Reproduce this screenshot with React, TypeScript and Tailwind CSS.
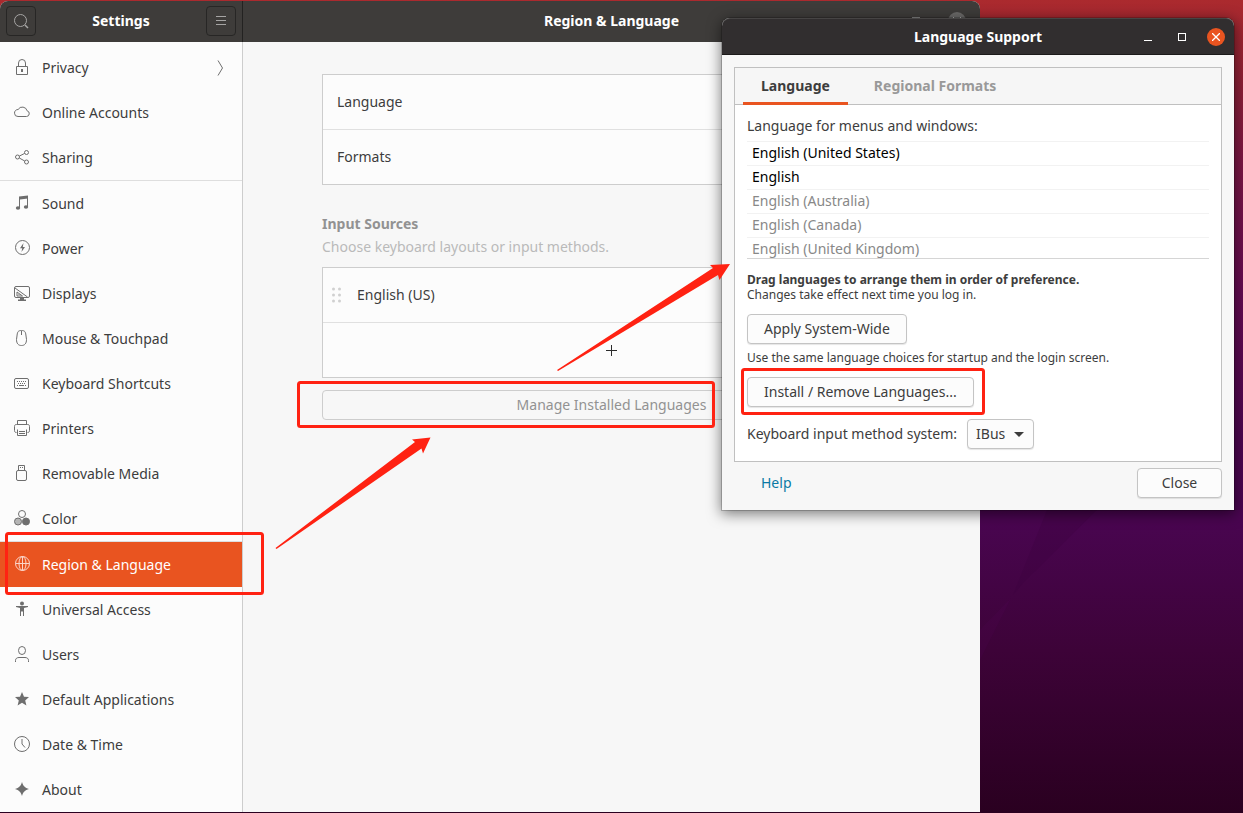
import { useState, type ReactNode } from "react";

interface NavItem {
  label: string;
  icon: ReactNode;
  arrow?: boolean;
  separator?: boolean;
}

function Icon({ children }: { children: ReactNode }) {
  return (
    <svg
      viewBox="0 0 16 16"
      className="h-4 w-4 flex-shrink-0"
      fill="none"
      stroke="currentColor"
      strokeWidth="1"
      aria-hidden="true"
    >
      {children}
    </svg>
  );
}

const NAV: NavItem[] = [
  {
    label: "Privacy",
    arrow: true,
    icon: (
      <>
        <path d="M2.5 7.5h11v8h-11zM4.500 7.500V4a3.500 3.500 0 0 1 7 0v3.500" />
        <path d="M7 10h2v3H7z" fill="currentColor" stroke="none" />
      </>
    ),
  },
  {
    label: "Online Accounts",
    icon: <path d="M4 12.500h8.500a2.900 2.900 0 0 0 .6-5.700 4.900 4.900 0 0 0-9-1.300A3.500 3.500 0 0 0 .5 9.200 3.400 3.400 0 0 0 4 12.500z" />,
  },
  {
    label: "Sharing",
    icon: (
      <>
        <circle cx="3.500" cy="8" r="2" />
        <circle cx="12.500" cy="3.500" r="2" />
        <circle cx="12.500" cy="13" r="2" />
        <path d="M5.300 7.100l5.400-2.700M5.300 9l5.400 3" />
      </>
    ),
  },
  {
    label: "Sound",
    separator: true,
    icon: (
      <g fill="currentColor" stroke="none">
        <path d="M5 1.500L14 .5v3L6 4.500V13H5z" />
        <path d="M13 1h1v11h-1z" />
        <ellipse cx="4" cy="13" rx="2.200" ry="1.800" />
        <ellipse cx="12" cy="12" rx="2.200" ry="1.800" />
      </g>
    ),
  },
  {
    label: "Power",
    icon: (
      <>
        <circle cx="8.500" cy="7.500" r="7" />
        <path d="M9.500 3L6 8.200h2.200L7.500 12 11 7H8.800z" fill="currentColor" stroke="none" />
      </>
    ),
  },
  {
    label: "Displays",
    icon: (
      <>
        <rect x=".5" y="1.500" width="15" height="11" rx="1.500" />
        <path d="M1 3l12.500 9M3 7v4h5.500L3 7M4.500 9.500h1" />
        <path d="M6 13h4v1.500h2V16H4v-1.500h2z" fill="currentColor" stroke="none" />
      </>
    ),
  },
  {
    label: "Mouse & Touchpad",
    icon: <path d="M7.500.5C4 .5 3.500 2 3.100 5l-.6 4.500c0 4 1.800 6 5 6s5-2 5-6L11.900 5C11.500 2 11 .5 7.500.5zM7.500 1v4" />,
  },
  {
    label: "Keyboard Shortcuts",
    icon: (
      <>
        <rect x=".5" y="3.500" width="14" height="10" rx="1.500" />
        <path d="M3 6.500h9M4 8.500h8" strokeDasharray="1 1" />
        <path d="M3 10.500h1M5 10.500h5M11 10.500h1" />
      </>
    ),
  },
  {
    label: "Printers",
    icon: (
      <>
        <path d="M3.500 4V.5h9V4M2.500 12.500C1.200 12.500.5 12 .5 10.500V6.500c0-1.500.7-2 2-2h11c1.300 0 2 .5 2 2v4c0 1.500-.7 2-2 2" />
        <path d="M3.500 9.500v6h9v-6M5 11.500h6M5 13.500h6" />
      </>
    ),
  },
  {
    label: "Removable Media",
    icon: (
      <>
        <rect x="2.500" y="5.500" width="10" height="10" rx="1.500" />
        <path d="M4.500 5V.5h6V5M6 2.500h1M8 2.500h1" />
      </>
    ),
  },
  {
    label: "Color",
    icon: (
      <>
        <circle cx="8" cy="4" r="3.500" />
        <circle cx="4" cy="11.500" r="3.500" fill="#b5b5b5" />
        <circle cx="12" cy="11.500" r="3.500" fill="currentColor" />
      </>
    ),
  },
  {
    label: "Region & Language",
    separator: true,
    icon: (
      <>
        <circle cx="8.500" cy="7.500" r="7" />
        <ellipse cx="8.500" cy="7.500" rx="3.500" ry="7" />
        <path d="M8.500.5v14M1.500 7.500h14" />
      </>
    ),
  },
  {
    label: "Universal Access",
    icon: (
      <g fill="currentColor" stroke="none">
        <circle cx="8" cy="2.500" r="2" />
        <path d="M2 5h12v1l-4 1v8H9v-4.500H7V15H6V7L2 6z" />
      </g>
    ),
  },
  {
    label: "Users",
    icon: (
      <>
        <ellipse cx="8" cy="4.500" rx="3.500" ry="4" />
        <path d="M1.500 16v-1.500c0-2 1.500-3 3.500-3h6c2 0 3.500 1 3.500 3V16" />
      </>
    ),
  },
  {
    label: "Default Applications",
    icon: (
      <path
        d="M8 1l2 4.700 5 .4-3.800 3.300 1.200 5L8 11.800l-4.400 2.600 1.200-5L1 6.100l5-.4z"
        fill="currentColor"
        stroke="none"
      />
    ),
  },
  {
    label: "Date & Time",
    icon: (
      <>
        <circle cx="8" cy="8" r="7.500" />
        <path d="M8 3v5l3 3.500" />
      </>
    ),
  },
  {
    label: "About",
    icon: (
      <path
        d="M8 1c1.300 4.200 2.800 5.700 7 7-4.200 1.300-5.700 2.800-7 7-1.300-4.200-2.800-5.700-7-7 4.200-1.300 5.700-2.800 7-7z"
        fill="currentColor"
        stroke="none"
      />
    ),
  },
];

const LANGUAGES = [
  { name: "English (United States)", enabled: true },
  { name: "English", enabled: true },
  { name: "English (Australia)", enabled: false },
  { name: "English (Canada)", enabled: false },
  { name: "English (United Kingdom)", enabled: false },
];

// ── Desktop background ──────────────────────────────────────────────────────
function Wallpaper() {
  return (
    <div className="absolute inset-0 bg-[linear-gradient(to_bottom,#ab2a2e_0%,#8f2036_10%,#7c1745_20%,#650b52_36%,#4d0650_54%,#490550_64%,#3d0338_80%,#2a0020_100%)]">
      <svg viewBox="0 0 283 333" className="absolute bottom-0 right-0 h-[333px] w-[283px]" aria-hidden="true">
        <path d="M87 30h50L63 103 53 115z" fill="#3a0340" opacity=".3" />
        <path d="M51 118L20 150v30l9-18z" fill="#5a0a60" opacity=".12" />
      </svg>
    </div>
  );
}

// ── Settings window ─────────────────────────────────────────────────────────
function Sidebar() {
  const [active, setActive] = useState("Region & Language");

  return (
    <nav className="w-[243px] flex-shrink-0 border-r border-[#cdcdcd] bg-[#fcfcfc] pt-[3px]">
      {NAV.map((item) => (
        <div key={item.label} className={item.separator ? "border-t border-[#dedede]" : ""}>
          <button
            onClick={() => setActive(item.label)}
            className={`flex h-[45px] w-full items-center gap-3 pl-3.5 pr-[18px] text-left ${
              active === item.label ? "bg-[#e95420] text-white" : "text-[#3d3d3d]"
            }`}
          >
            <span className={`pb-0.5 ${active === item.label ? "text-[#fbd5c8]" : "text-[#6e6e6e]"}`}>
              <Icon>{item.icon}</Icon>
            </span>
            <span className="flex-1">{item.label}</span>
            {item.arrow && (
              <svg viewBox="0 0 8 16" className="h-4 w-2 text-[#6e6e6e]" fill="none" stroke="currentColor" aria-hidden="true">
                <path d="M2 .5L6.500 8 2 15.500" />
              </svg>
            )}
          </button>
        </div>
      ))}
    </nav>
  );
}

function SettingsWindow() {
  return (
    <section className="absolute bottom-px left-0 right-[263px] top-px flex flex-col overflow-hidden rounded-t-lg bg-[#f7f7f7]">
      <header className="flex h-[41px] flex-shrink-0 bg-[#3e3c3a] font-bold text-white">
        <div className="flex w-[243px] items-center justify-between border-r border-[#232221] px-1.5 pb-0.5">
          <button
            aria-label="Search"
            className="flex h-[30px] w-[30px] items-center justify-center rounded border border-[#272625] text-[#a6a5a4]"
          >
            <Icon>
              <circle cx="7.500" cy="7.500" r="6" />
              <path d="M12 12l3 3" strokeWidth="1.500" />
            </Icon>
          </button>
          <h1>Settings</h1>
          <button
            aria-label="Menu"
            className="flex h-[30px] w-[30px] items-center justify-center rounded border border-[#272625] text-[#a6a5a4]"
          >
            <Icon>
              <path d="M3 3.500h10M3 7.500h10M3 11.500h10" />
            </Icon>
          </button>
        </div>
        <div className="relative flex flex-1 items-center justify-center pb-0.5">
          <h2>Region &amp; Language</h2>
          <div className="absolute right-3.5 flex items-center gap-7">
            <button aria-label="Restore" className="h-2 w-2 border border-[#9a9a9a]" />
            <button
              aria-label="Close settings"
              className="flex h-[18px] w-[18px] items-center justify-center rounded-full bg-[#6b6a69] text-[#c9c9c9]"
            >
              <svg viewBox="0 0 8 8" className="h-2 w-2" stroke="currentColor" aria-hidden="true">
                <path d="M0 0l8 8M8 0L0 8" />
              </svg>
            </button>
          </div>
        </div>
      </header>

      <div className="flex min-h-0 flex-1">
        <Sidebar />
        <main className="flex-1 px-[79px] pt-8 text-[#3d3d3d]">
          <div className="divide-y divide-[#e0e0e0] border border-[#cdcdcd] bg-[#fcfcfc]">
            <button className="flex h-[55px] w-full items-center px-3.5">Language</button>
            <button className="flex h-[54px] w-full items-center px-3.5">Formats</button>
          </div>

          <h3 className="mt-[29px] font-bold text-[#929292]">Input Sources</h3>
          <p className="mt-[3px] text-[#bababa]">Choose keyboard layouts or input methods.</p>

          <div className="mt-2.5 divide-y divide-[#e0e0e0] border border-[#cdcdcd] bg-[#fcfcfc]">
            <div className="flex h-[55px] items-center gap-4 px-[9px]">
              <svg viewBox="0 0 9 16" className="h-4 w-[9px]" fill="#d0d0d0" aria-hidden="true">
                {[2, 8, 14].map((y) => (
                  <g key={y}>
                    <circle cx="1.500" cy={y} r="1.500" />
                    <circle cx="7.500" cy={y} r="1.500" />
                  </g>
                ))}
              </svg>
              <span>English (US)</span>
            </div>
            <button aria-label="Add input source" className="flex h-[54px] w-full items-center justify-center">
              <svg viewBox="0 0 11 11" className="h-[11px] w-[11px]" stroke="#2b2b2b" aria-hidden="true">
                <path d="M5.500 0v11M0 5.500h11" />
              </svg>
            </button>
          </div>

          <button className="mt-3 h-[30px] w-full rounded border border-[#cdcdcd] text-[#929292]">
            Manage Installed Languages
          </button>
        </main>
      </div>
    </section>
  );
}

// ── Language Support dialog ─────────────────────────────────────────────────
const BUTTON = "h-[30px] rounded border border-[#c4c4c4] bg-[#fcfcfc] shadow-[0_1px_1px_#0000001a]";

function LanguageDialog() {
  const [tab, setTab]       = useState("Language");
  const [method, setMethod] = useState("IBus");

  return (
    <section className="absolute right-[9px] top-[18px] w-[512px] rounded-t-lg bg-[#f7f7f7] text-[#3d3d3d] shadow-[0_3px_14px_1px_#00000080,0_0_0_1px_#00000030]">
      <header className="relative flex h-[37px] items-center justify-center rounded-t-lg border-b border-[#1c1a1a] border-t border-t-[#464444] bg-[#312e2f] font-bold text-white">
        <h2>Language Support</h2>
        <div className="absolute right-[9px] flex items-center gap-[21px]">
          <span className="flex items-center gap-[26px]">
            <button aria-label="Minimize" className="flex h-2 w-2 items-end">
              <span className="h-px w-2 bg-white" />
            </button>
            <button aria-label="Maximize" className="h-2 w-2 border border-white" />
          </span>
          <button
            aria-label="Close window"
            className="flex h-[18px] w-[18px] items-center justify-center rounded-full bg-[#e95420]"
          >
            <svg viewBox="0 0 8 8" className="h-2 w-2" stroke="white" strokeWidth="1.300" aria-hidden="true">
              <path d="M0 0l8 8M8 0L0 8" />
            </svg>
          </button>
        </div>
      </header>

      <div className="p-3">
        <div className="border border-[#c0c0c0] bg-white">
          <div role="tablist" className="flex h-[37px] gap-2 border-b border-[#c0c0c0] bg-[#f6f6f6] px-2">
            {["Language", "Regional Formats"].map((t) => (
              <button
                key={t}
                role="tab"
                aria-selected={tab === t}
                onClick={() => setTab(t)}
                className={`-mb-px border-b-3 px-[18px] pt-0.5 font-bold ${
                  tab === t ? "border-[#e95420]" : "border-transparent text-[#999999]"
                }`}
              >
                {t}
              </button>
            ))}
          </div>

          <div className="px-3 pb-3 pt-[11px]">
            <p>Language for menus and windows:</p>
            <ul className="mt-[5px] h-[118px] overflow-hidden border-b border-[#d5d5d5]">
              {LANGUAGES.map((lang) => (
                <li
                  key={lang.name}
                  className={`h-6 border-t border-[#f2f2f2] px-[5px] leading-[22px] ${
                    lang.enabled ? "text-black" : "text-[#888888]"
                  }`}
                >
                  {lang.name}
                </li>
              ))}
            </ul>

            <div className="mt-[13px] text-xs leading-[15px]">
              <p className="font-bold">Drag languages to arrange them in order of preference.</p>
              <p>Changes take effect next time you log in.</p>
            </div>

            <button className={`${BUTTON} mt-3 px-4`}>Apply System-Wide</button>
            <p className="mt-1.5 text-xs leading-[15px]">
              Use the same language choices for startup and the login screen.
            </p>
            <button className={`${BUTTON} mt-3 px-4`}>Install / Remove Languages...</button>

            <div className="mt-3 flex items-center gap-2.5">
              <label htmlFor="input-method">Keyboard input method system:</label>
              <div className="relative">
                <select
                  id="input-method"
                  value={method}
                  onChange={(e) => setMethod(e.target.value)}
                  className={`${BUTTON} w-[67px] appearance-none pl-2`}
                >
                  <option>IBus</option>
                  <option>none</option>
                </select>
                <svg
                  viewBox="0 0 10 5"
                  className="pointer-events-none absolute right-2.5 top-[13px] h-[5px] w-2.5"
                  fill="#3d3d3d"
                  aria-hidden="true"
                >
                  <path d="M0 0h10L5 5z" />
                </svg>
              </div>
            </div>
          </div>
        </div>

        <div className="mt-1.5 flex items-center justify-between">
          <a href="#help" className="pl-[27px] text-[#0a7aa5]">
            Help
          </a>
          <button className={`${BUTTON} w-[85px]`}>Close</button>
        </div>
      </div>
    </section>
  );
}

// ── Red boxes and arrows drawn over the windows ─────────────────────────────
function Annotations() {
  return (
    <svg className="pointer-events-none absolute inset-0 h-full w-full" aria-hidden="true">
      <g fill="none" stroke="#ff2212" strokeWidth="3">
        <rect x="6.500" y="533.500" width="256" height="60" rx="2" />
        <rect x="298.500" y="382.500" width="415" height="44" rx="2" />
        <rect x="742.500" y="369.500" width="241" height="44" rx="2" />
      </g>
      <g fill="#ff2212">
        <path d="M275.500 548L415 442l-3-2.500L430.500 437.500 423 453.500l-1.500-5L276.500 549z" />
        <path d="M557 370L713 268l-3-3 20-1L719.500 280l-1.500-5L558 371z" />
      </g>
    </svg>
  );
}

export default function App() {
  return (
    <div className="relative h-screen min-h-[813px] overflow-hidden font-['Noto_Sans',sans-serif] text-sm">
      <Wallpaper />
      <SettingsWindow />
      <LanguageDialog />
      <Annotations />
    </div>
  );
}
